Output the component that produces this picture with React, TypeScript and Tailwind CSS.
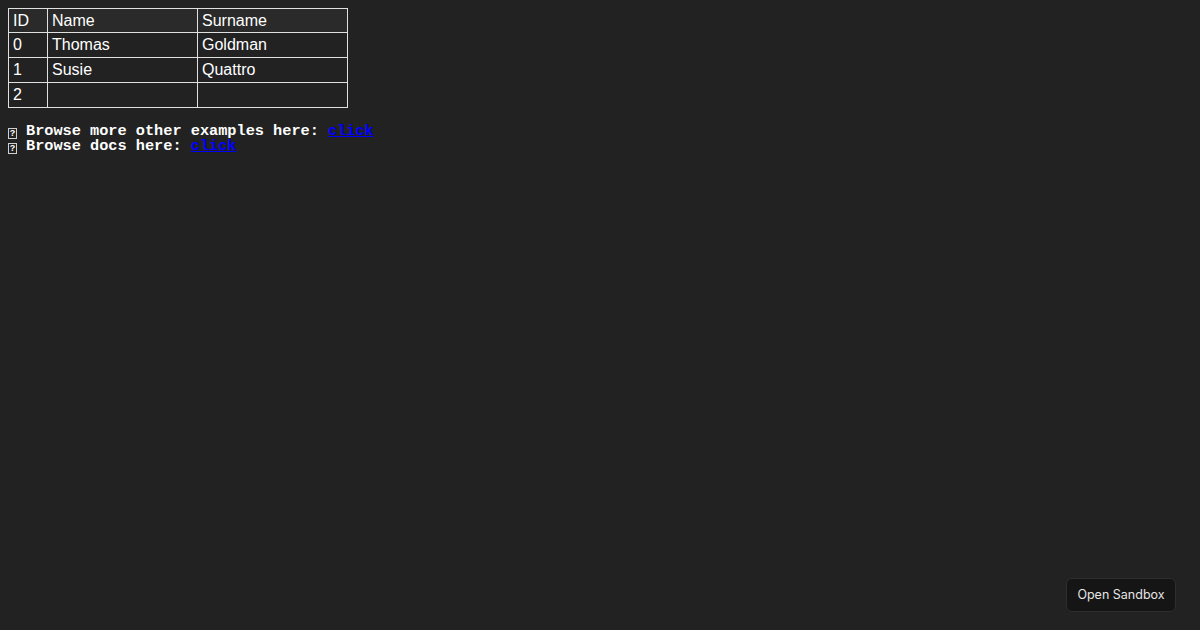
function Tofu() {
  // missing-glyph box the browser shows for the emoji
  return (
    <span className="inline-flex w-[9px] h-[11px] mr-[9px] items-center justify-center border border-[#d0d0d0] align-[-1px] font-['Liberation_Sans',sans-serif] text-[9px] leading-none font-bold">
      ?
    </span>
  )
}

export default function App() {
  const rows = [
    { id: 0, name: 'Thomas', surname: 'Goldman' },
    { id: 1, name: 'Susie', surname: 'Quattro' },
    { id: 2, name: '', surname: '' },
  ]

  return (
    <div className="min-h-screen bg-[#222222] p-2 text-white font-['Liberation_Sans',Arial,sans-serif]">
      <table className="border-collapse text-base leading-[22px]">
        <thead>
          <tr className="bg-[#2a2a2a]">
            <th className="w-[39px] h-[24px] border border-[#e0e0e0] pl-1 pr-1 text-left font-normal">ID</th>
            <th className="w-[150px] border border-[#e0e0e0] px-1 text-left font-normal">Name</th>
            <th className="w-[150px] border border-[#e0e0e0] px-1 text-left font-normal">Surname</th>
          </tr>
        </thead>
        <tbody>
          {rows.map((r) => (
            <tr key={r.id}>
              <td className="h-[25px] border border-[#e0e0e0] px-1">{r.id}</td>
              <td className="border border-[#e0e0e0] px-1">{r.name}</td>
              <td className="border border-[#e0e0e0] px-1">{r.surname}</td>
            </tr>
          ))}
        </tbody>
      </table>

      <div className="mt-[16px] font-['Liberation_Mono','Courier_New',monospace] text-[15.25px] leading-[15px] font-bold">
        <div>
          <Tofu />Browse more other examples here:{' '}
          <a href="#" className="text-[#0000ff] underline">click</a>
        </div>
        <div>
          <Tofu />Browse docs here:{' '}
          <a href="#" className="text-[#0000ff] underline">click</a>
        </div>
      </div>

      <button className="fixed right-6 bottom-[18px] w-[110px] h-[34px] rounded-md bg-[#151515] border border-[#2e2e2e] text-[12.5px] text-[#e5e5e5] font-['Inter',sans-serif]">
        Open Sandbox
      </button>
    </div>
  )
}
